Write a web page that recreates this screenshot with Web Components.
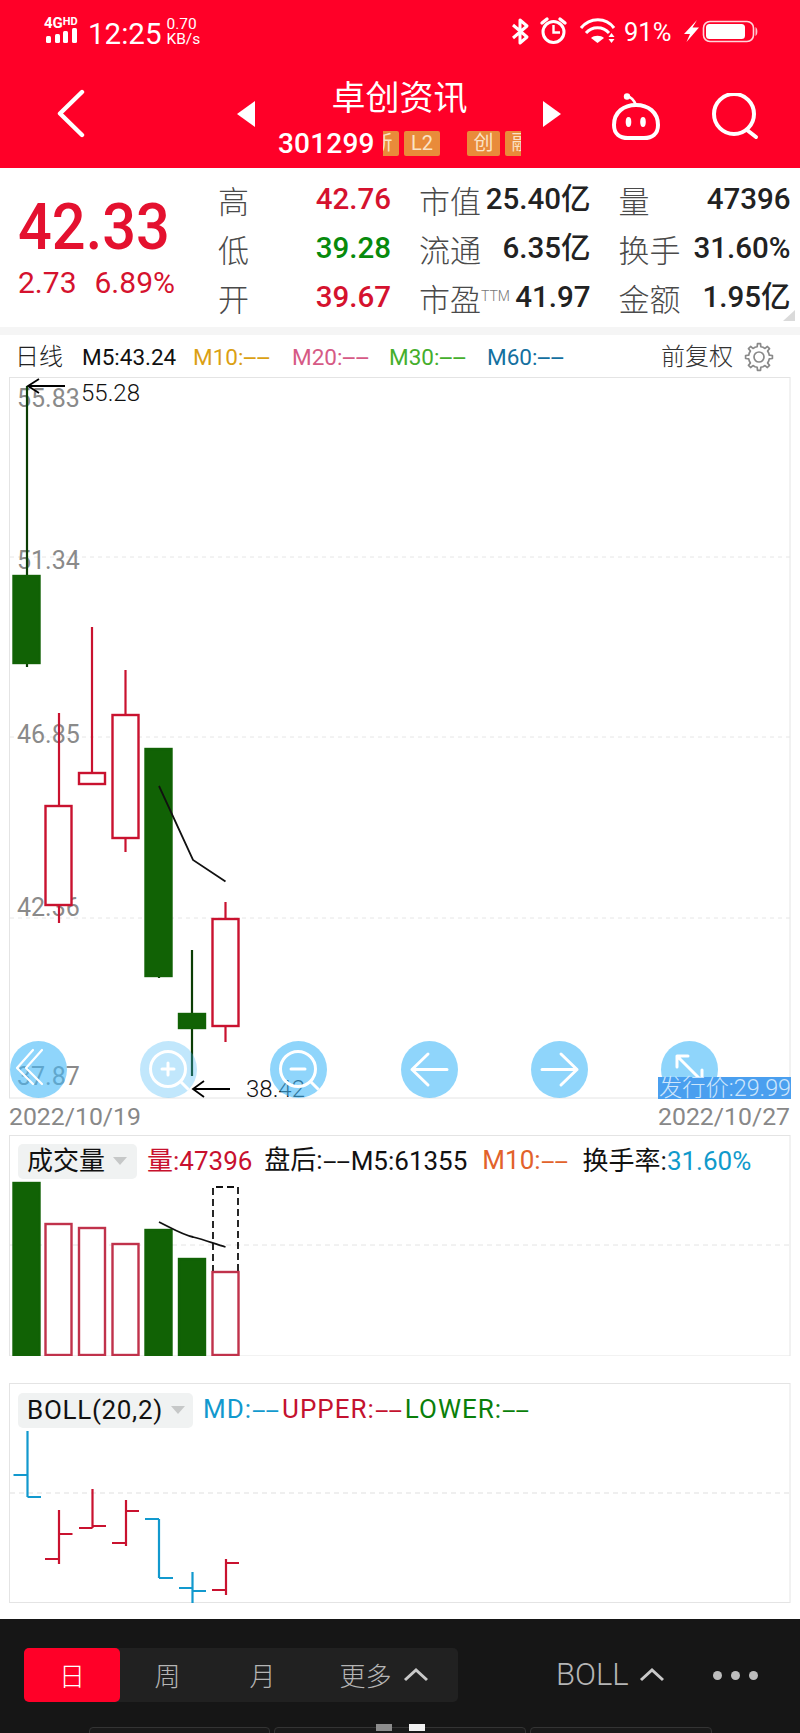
<!DOCTYPE html>
<html lang="zh"><head><meta charset="utf-8"><title>卓创资讯</title>
<style>
html,body{margin:0;padding:0;background:#fff}
body{width:800px;height:1733px;overflow:hidden;display:flex;flex-direction:column;font-family:Roboto,"Noto Sans CJK SC",sans-serif}
</style></head><body>
<app-header></app-header>
<quote-panel></quote-panel>
<ma-legend></ma-legend>
<kline-chart></kline-chart>
<date-row></date-row>
<volume-chart></volume-chart>
<boll-chart></boll-chart>
<bottom-bar></bottom-bar>
<script>
const FONT='Roboto,"Noto Sans CJK SC",sans-serif';
const GREEN='#116205',RED='#C8102E';
const D='<span class="d">--</span>';
const DSTYLE='.d{display:inline-block;width:28px;font-family:Roboto,sans-serif;font-size:24px;font-weight:400;letter-spacing:0;transform:scaleX(2.05);transform-origin:0 50%;white-space:nowrap}';
function mk(name,html){
  customElements.define(name,class extends HTMLElement{
    constructor(){super();this.attachShadow({mode:'open'}).innerHTML=typeof html==='function'?html(this):html;}
  });
}
const candles=[
 {x:27,g:1,l:13.5,t:576,b:663,wt:386,wb:667},
 {x:59,l:45.5,t:806,b:905,wt:713,wb:923},
 {x:92,l:79,t:773,b:784,wt:627,wb:784},
 {x:125.5,l:112.5,t:715,b:838,wt:670,wb:852},
 {x:159,g:1,l:145.5,t:749,b:976,wt:749,wb:978},
 {x:192,g:1,l:179,t:1014,b:1028,wt:950,wb:1076},
 {x:225.5,l:212.5,t:919,b:1026,wt:902,wb:1042}
];
function candleSvg(){
  return candles.map(c=>{
    const col=c.g?GREEN:'#C9122F';
    return `<line x1="${c.x}" x2="${c.x}" y1="${c.wt}" y2="${c.t}" stroke="${c.g?'#0B3D05':col}" stroke-width="2.2"/>`+
      `<line x1="${c.x}" x2="${c.x}" y1="${c.b}" y2="${c.wb}" stroke="${c.g?'#0B3D05':col}" stroke-width="2.2"/>`+
      `<rect x="${c.l}" y="${c.t}" width="26" height="${c.b-c.t}" fill="${c.g?GREEN:'#fff'}" stroke="${col}" stroke-width="2.4"/>`;
  }).join('');
}
function gearPath(cx,cy,n,ro,ri){
  let s='';const st=Math.PI*2/n;
  for(let i=0;i<n;i++){
    const a=i*st-Math.PI/2;
    const p=[[a-st*.5,ri],[a-st*.22,ri],[a-st*.14,ro],[a+st*.14,ro],[a+st*.22,ri]];
    p.forEach((q,j)=>{s+=(i===0&&j===0?'M':'L')+(cx+q[1]*Math.cos(q[0])).toFixed(1)+' '+(cy+q[1]*Math.sin(q[0])).toFixed(1);});
  }
  return s+'Z';
}

mk('status-bar',`<style>
:host{display:flex;align-items:center;height:60px;color:#fff;position:relative;padding:4px 0 0 44px;box-sizing:border-box}
.net{display:flex;flex-direction:column;width:35px;margin-top:-6px}
.g{font:700 15px/14px Roboto,sans-serif;height:13px;white-space:nowrap}
.g small{font-size:11px;vertical-align:3px;margin-left:0}
.time{font:400 29.5px/32px Roboto,sans-serif;margin:4px 0 0 9px}
.sp{display:flex;flex-direction:column;font:400 15.5px/15px Roboto,sans-serif;margin:0 0 0 5px}
.pct{font:400 25.5px/30px Roboto,sans-serif;position:absolute;left:624px;top:17px}
svg{display:block}
</style>
<div class="net"><div class="g">4G<small>HD</small></div>
<svg width="33" height="16" viewBox="0 0 33 16" fill="#fff"><rect x="2" y="8" width="5" height="7" rx="1.5"/><rect x="11" y="6" width="5" height="9" rx="1.5"/><rect x="19" y="3" width="5" height="12" rx="1.5"/><rect x="28" y="0" width="5" height="15" rx="1.5"/></svg></div>
<div class="time">12:25</div>
<div class="sp"><span>0.70</span><span>KB/s</span></div>
<svg style="position:absolute;left:500px;top:10px" width="270" height="40" viewBox="500 10 270 40" fill="none" stroke="#fff">
<path d="M513 25L527 37L520 43V20L527 26L513 38" stroke-width="3" stroke-linejoin="round"/>
<circle cx="553.5" cy="32" r="10.5" stroke-width="3"/><path d="M553.5 25V32.5H560" stroke-width="2.4"/>
<path d="M542 23L547 19M565 23L560 19" stroke-width="3.4" stroke-linecap="round"/>
<path d="M581 28C590 17 606 17 614 28" stroke-width="3"/><path d="M586 33C592 26 603 26 609 33" stroke-width="3"/>
<path d="M591 38C594 35 601 35 604 38L597.5 43Z" fill="#fff" stroke="none"/>
<path d="M608.5 37L611.5 33L614.5 37ZM608.5 39L611.5 43L614.5 39Z" fill="#fff" stroke="none"/>
<path d="M697 20L684 34H690L686.5 42L699 27.5H692.5Z" fill="#fff" stroke="none"/>
<rect x="703.5" y="21.5" width="50" height="20" rx="6.5" stroke-width="1.6" stroke="#FFD6DC"/>
<rect x="706" y="24" width="39" height="15" rx="3.5" fill="#fff" stroke="none"/>
<path d="M755.5 27C758 28 758 35 755.5 36Z" fill="#FFC4CC" stroke="none"/>
</svg>
<div class="pct">91%</div>`);

mk('stock-tag',`<style>:host{display:flex;flex:none;align-items:center;justify-content:center;height:25px;background:#E98B3A;color:#FBE3C6;font:400 20px/25px Roboto,"Noto Sans CJK SC",sans-serif;border-radius:2px}</style><slot></slot>`);

mk('nav-bar',`<style>
:host{display:flex;align-items:center;height:108px;color:#fff;padding-left:57px;box-sizing:border-box}
svg{display:block;flex:none}
.c{width:243px;margin:10px 22px 0 23px;display:flex;flex-direction:column;align-items:stretch;flex:none}
.t{font:400 34px/42px "Noto Sans CJK SC",sans-serif;text-align:center;height:42px;margin-top:-5px}
.row{display:flex;align-items:center;height:30px;margin-top:12px}
.code{font:500 28px/30px Roboto,sans-serif;width:105px;flex:none;letter-spacing:.2px}
.m{width:138px;overflow:hidden;flex:none}
.i{display:flex;gap:5px;margin-left:-17px;width:max-content}
</style>
<svg width="28" height="50" viewBox="0 0 28 50" fill="none" stroke="#fff" stroke-width="4.4" stroke-linecap="round" stroke-linejoin="round"><path d="M25 3L3 24.5L25 46"/></svg>
<svg width="18" height="26" viewBox="0 0 18 26" fill="#fff" style="margin-left:152px"><path d="M18 0V26L0 13Z"/></svg>
<div class="c"><div class="t">卓创资讯</div>
<div class="row"><div class="code">301299</div><div class="m"><div class="i">
<stock-tag style="width:33px">新</stock-tag><stock-tag style="width:36px">L2</stock-tag><stock-tag style="width:33px;margin-left:22px">创</stock-tag><stock-tag style="width:33px">融</stock-tag>
</div></div></div></div>
<svg width="18" height="26" viewBox="0 0 18 26" fill="#fff"><path d="M0 0V26L18 13Z"/></svg>
<svg width="52" height="50" viewBox="0 0 52 50" fill="none" stroke="#fff" style="margin:8px 0 0 49px" >
<path d="M4 32C4 19 14 12 26 12C38 12 48 19 48 32C48 41 42 45 34 45H18C10 45 4 41 4 32Z" stroke-width="4"/>
<path d="M17 3C21 4 24 7 26 12" stroke-width="2.6"/><circle cx="17" cy="3.5" r="3.2" fill="#fff" stroke="none"/>
<ellipse cx="18.5" cy="29" rx="2.8" ry="5" fill="#fff" stroke="none"/><ellipse cx="33" cy="29" rx="2.8" ry="5" fill="#fff" stroke="none"/></svg>
<svg width="50" height="50" viewBox="0 0 50 50" fill="none" stroke="#fff" stroke-width="4" style="margin:8px 0 0 50px">
<circle cx="22" cy="21" r="20"/><path d="M35 37L44 44" stroke-linecap="round"/></svg>`);

mk('app-header',`<style>:host{display:block;background:#FF0028;height:168px;flex:none}</style><status-bar></status-bar><nav-bar></nav-bar>`);

mk('quote-cell',`<style>
:host{display:flex;justify-content:space-between;align-items:center;height:49px;white-space:nowrap}
.l{font:300 31px/49px "Noto Sans CJK SC",sans-serif;color:#4a4a4a}
.v{font:500 29.5px/49px Roboto,"Noto Sans CJK SC",sans-serif;color:var(--c,#222)}
</style><span class="l"><slot name="l"></slot></span><span class="v"><slot></slot></span>`);

const qc=(l,v,c)=>`<quote-cell style="${c?'--c:'+c:''}"><span slot="l">${l}</span>${v}</quote-cell>`;
mk('quote-panel',`<style>
:host{display:flex;flex:none;background:#fff;position:relative;box-sizing:border-box;border-bottom:8px solid #F5F5F5;height:167px;white-space:nowrap}
.left{width:218px;flex:none;padding-left:18px;box-sizing:border-box;color:#E4112F}
.big{font:500 59.5px/64px Roboto,sans-serif;margin-top:27px;transform:scaleY(1.1);transform-origin:50% 50%;height:64px}
.sub{font:400 30px/34px Roboto,sans-serif;color:#D5122E;margin-top:7px;display:flex;gap:18px}
.grid{display:grid;grid-template-columns:173px 171.5px 172px;column-gap:28px;padding-top:7px;align-content:start}
.tri{position:absolute;right:5px;bottom:6px;width:0;height:0;border-style:solid;border-width:0 0 11px 12px;border-color:transparent transparent #DADADA transparent}
</style>
<div class="left"><div class="big">42.33</div><div class="sub"><span>2.73</span><span>6.89%</span></div></div>
<div class="grid">
${qc('高','42.76','#D5122E')}${qc('市值','25.40亿')}${qc('量','47396')}
${qc('低','39.28','#078A0C')}${qc('流通','6.35亿')}${qc('换手','31.60%')}
${qc('开','39.67','#D5122E')}<quote-cell><span slot="l">市盈<sup style="font:300 14px/14px Roboto,sans-serif;color:#777;position:relative;top:-10px;vertical-align:baseline">TTM</sup></span>41.97</quote-cell>${qc('金额','1.95亿')}
</div><div class="tri"></div>`);

mk('ma-legend',`<style>${DSTYLE}
:host{display:flex;flex:none;align-items:center;height:42px;padding:3px 0 0 15px;font:400 22.5px/39px Roboto,"Noto Sans CJK SC",sans-serif;white-space:nowrap;position:relative;box-sizing:border-box}
span.m{flex:none}
.x{font-size:24px;font-weight:300;color:#222}
.g{position:absolute;left:744px;top:7px}
</style>
<span class="m x">日线</span>
<span class="m" style="margin-left:19px;color:#111">M5:43.24</span>
<span class="m" style="position:absolute;left:193px;color:#DBA013">M10:${D}</span>
<span class="m" style="position:absolute;left:292px;color:#D65A85">M20:${D}</span>
<span class="m" style="position:absolute;left:389px;color:#45AE2C">M30:${D}</span>
<span class="m" style="position:absolute;left:487px;color:#14709F">M60:${D}</span>
<span class="m x" style="position:absolute;left:661px;color:#333">前复权</span>
<svg class="g" width="30" height="30" viewBox="0 0 30 30" fill="none" stroke="#8a8a8a" stroke-width="1.7" stroke-linejoin="round"><path d="${gearPath(15,15,8,13.5,10.5)}"/><circle cx="15" cy="15" r="5"/></svg>`);

mk('chart-button',el=>{
 const icons={
  first:'<path d="M23 9L7 27L23 43M32 9L16 27L32 43" stroke-width="2.2"/>',
  zin:'<circle cx="28" cy="28" r="17.5"/><path d="M41 41L52 52M22 28H34M28 22V34"/>',
  zout:'<circle cx="28" cy="28" r="17.5"/><path d="M41 41L52 52M21 28H35"/>',
  left:'<path d="M46 28.5H11M27 13L11 28.5L27 44"/>',
  right:'<path d="M11 28.5H46M30 13L46 28.5L30 44"/>',
  full:'<path d="M16 15L41 40M16 26V15H27M41 29V40H30"/>'
 };
 const k=el.getAttribute('icon');
 return `<style>:host{position:absolute;width:57px;height:57px;top:664px;border-radius:50%;overflow:hidden;background:rgba(68,185,248,.6);display:block}
 svg{display:block}</style><svg width="57" height="57" viewBox="0 0 57 57" fill="none" stroke="#fff" stroke-width="3" stroke-linecap="round" stroke-linejoin="round">${icons[k]}</svg>`;
});

mk('kline-chart',`<style>
:host{display:block;flex:none;height:721px;margin:0 9px;position:relative;box-sizing:border-box}
svg.c{position:absolute;left:0;top:0;display:block;overflow:visible}
text{font-family:${FONT}}
.issue{position:absolute;right:0;bottom:-1px;height:22px;width:133px;background:#4A9FEF;color:#CDE6FC;font:300 23.3px/22px Roboto,"Noto Sans CJK SC",sans-serif;white-space:nowrap;text-align:right}
</style>
<svg class="c" width="782" height="721" viewBox="9 377 782 721" fill="none">
<rect x="9.5" y="377.5" width="780.5" height="720.5" stroke="#E4E4E4"/>
<path d="M10 557H790M10 737H790M10 918H790" stroke="#E6E6E6" stroke-dasharray="4 4"/>
<g fill="#8A8A8A" font-size="25" stroke="none">
<text x="17" y="407">55.83</text><text x="17" y="569">51.34</text><text x="17" y="743">46.85</text><text x="17" y="916">42.36</text><text x="17" y="1085">37.87</text></g>
${candleSvg()}
<path d="M159 786L193 860L225.5 881.5" stroke="#111" stroke-width="1.8"/>
<path d="M65 386H28M39 379L28 386L39 393M230 1089H193M204 1081L193 1089L204 1097" stroke="#000" stroke-width="1.8"/>
<g fill="#111" font-size="24" font-weight="300" stroke="none"><text x="81" y="401">55.28</text><text x="246" y="1097">38.42</text></g>
</svg>
<chart-button icon="first" style="left:1px"></chart-button>
<chart-button icon="zin" style="left:131px;opacity:.55"></chart-button>
<chart-button icon="zout" style="left:261px"></chart-button>
<chart-button icon="left" style="left:392px"></chart-button>
<chart-button icon="right" style="left:522px"></chart-button>
<chart-button icon="full" style="left:652px"></chart-button>
<div class="issue">发行价:29.99</div>`);

mk('date-row',`<style>:host{display:flex;flex:none;justify-content:space-between;height:37px;margin:0 10px 0 9px;font:400 24.8px/38px Roboto,sans-serif;color:#888}</style><span>2022/10/19</span><span>2022/10/27</span>`);

mk('legend-tag',`<style>:host{display:flex;flex:none;align-items:center;height:35px;background:#F0F2F2;border-radius:5px;padding:0 9px;box-sizing:border-box;color:#111;font:400 26px/35px Roboto,"Noto Sans CJK SC",sans-serif;white-space:nowrap}
i{display:block;margin-left:8px;width:0;height:0;border-style:solid;border-width:8px 7.5px 0;border-color:#C6C8C8 transparent transparent}</style><slot></slot><i></i>`);

const volBars=[[13.5,1183,GREEN],[45.5,1224],[79,1228],[112.5,1244],[145.5,1230,GREEN],[179,1259,GREEN],[212.5,1272]];
mk('volume-chart',`<style>${DSTYLE}
:host{display:block;flex:none;height:221px;margin:0 9px 27px;position:relative;font:400 26px/35px Roboto,"Noto Sans CJK SC",sans-serif;white-space:nowrap}
svg{position:absolute;left:0;top:0}
.lg{position:absolute;left:9px;top:8px;display:flex;align-items:center}
span{flex:none}
</style>
<svg width="782" height="221" viewBox="9 1135 782 221" fill="none">
<rect x="9.5" y="1135.5" width="780.5" height="220.5" stroke="#E4E4E4"/>
<path d="M10 1245H790" stroke="#E4E4E4" stroke-dasharray="5 4"/>
<path d="M213 1272V1187H238V1272" stroke="#111" stroke-width="1.8" stroke-dasharray="7 4"/>
${volBars.map(b=>`<rect x="${b[0]}" y="${b[1]}" width="26" height="${1355-b[1]}" fill="${b[2]||'#fff'}" stroke="${b[2]||'#C0324B'}" stroke-width="2.4"/>`).join('')}
<path d="M159 1222C175 1230 183 1235 193 1237C205 1240 215 1244 225.5 1247" stroke="#111" stroke-width="1.8"/>
</svg>
<div class="lg"><legend-tag style="width:119px">成交量</legend-tag>
<span style="margin-left:10px;color:#C8102E">量:47396</span>
<span style="margin-left:12px;color:#111">盘后:${D}</span>
<span style="color:#111">M5:61355</span>
<span style="margin-left:15px;color:#E2622B">M10:${D}</span>
<span style="margin-left:14px;color:#111">换手率:<span style="color:#109ACB">31.60%</span></span></div>`);

const ohlc=[[27.5,1431,1497,13.5,1475,41,1497,'b'],[59,1510,1564,45,1559,72.5,1534],[92.5,1489,1528,79,1528,106,1526],[126,1500,1546,112,1543,139,1511],[159,1519,1578,145,1519,173,1578,'b'],[192.5,1572,1603,179,1588,206,1591,'b'],[226,1559,1595,212,1590,239,1563]];
mk('boll-chart',`<style>${DSTYLE}
:host{display:block;flex:none;height:220px;margin:0 9px 16px;position:relative;font:400 26px/35px Roboto,"Noto Sans CJK SC",sans-serif;white-space:nowrap}
svg{position:absolute;left:0;top:0}
.lg{position:absolute;left:9px;top:9px;display:flex;align-items:center}
.ls{letter-spacing:1px}
.d{width:30px}
</style>
<svg width="782" height="220" viewBox="9 1383 782 220" fill="none">
<rect x="9.5" y="1383.5" width="780.5" height="219" stroke="#E4E4E4"/>
<path d="M10 1493H790" stroke="#DFDFDF" stroke-dasharray="5 4"/>
${ohlc.map(o=>`<path d="M${o[0]} ${o[1]}V${o[2]}M${o[3]} ${o[4]}H${o[0]}M${o[0]} ${o[6]}H${o[5]}" stroke="${o[7]?'#1299CE':'#C9122F'}" stroke-width="2.2"/>`).join('')}
</svg>
<div class="lg"><legend-tag style="width:175px;padding-left:9px;letter-spacing:.7px">BOLL(20,2)</legend-tag>
<span class="ls" style="margin-left:10px;color:#1299CE">MD:${D}</span><span class="ls" style="color:#C4122F">UPPER:${D}</span><span class="ls" style="color:#0A7F0A">LOWER:${D}</span></div>`);

mk('period-tabs',`<style>
:host{display:flex;width:434px;height:54px;background:#212121;border-radius:5px;flex:none;font:300 26px/54px "Noto Sans CJK SC",sans-serif;color:#B5B5B5;white-space:nowrap}
div{display:flex;justify-content:center;align-items:center;width:96px;flex:none}
.a{background:#FF0028;color:#fff;border-radius:5px}
.b{width:95px}
.more{width:148px}
svg{margin-left:11px;display:block}
</style><div class="a">日</div><div class="b">周</div><div class="b">月</div><div class="more">更多<svg width="26" height="16" viewBox="0 0 26 16" fill="none" stroke="#C9C9C9" stroke-width="3"><path d="M2 13L13 3L24 13"/></svg></div>`);

mk('bottom-bar',`<style>
:host{display:block;flex:none;height:114px;background:#161616;position:relative;overflow:hidden;color:#B5B5B5}
.top{display:flex;align-items:center;height:54px;margin-top:0;padding:29px 0 0 24px}
.boll{font:300 31px/56px Roboto,sans-serif;margin-left:98px;flex:none}
svg{display:block;margin-left:10px;flex:none}
.dots{display:flex;gap:9px;margin-left:48px}
.dots i{display:block;width:9px;height:9px;border-radius:50%;background:#BDBDBD}
.peek{display:flex;gap:4px;margin:25px 0 0 89px}
.peek div{height:12px;border:1px solid #343434;border-radius:4px 4px 0 0;box-sizing:border-box;flex:none;background:#1A1A1A}
.mk{position:absolute;top:105px;width:16px;height:7px}
</style>
<div class="top"><period-tabs></period-tabs><span class="boll">BOLL</span>
<svg width="26" height="16" viewBox="0 0 26 16" fill="none" stroke="#C9C9C9" stroke-width="3"><path d="M2 13L13 3L24 13"/></svg>
<div class="dots"><i></i><i></i><i></i></div></div>
<div class="peek"><div style="width:181px"></div><div style="width:252px"></div><div style="width:182px"></div></div>
<div class="mk" style="left:376px;background:#8C8C8C"></div><div class="mk" style="left:409px;background:#F2F2F2"></div>`);
</script>
</body></html>
